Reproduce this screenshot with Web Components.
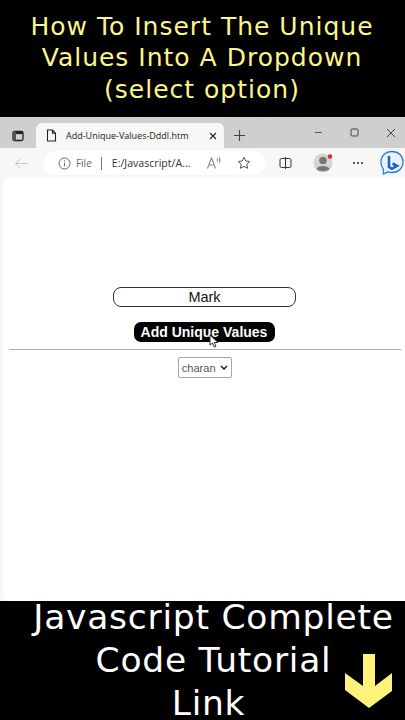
<!DOCTYPE html>
<html><head><meta charset="utf-8"><style>
html,body{margin:0;padding:0;background:#000;overflow:hidden}
body{width:405px;height:720px}
</style></head><body>
<video-short></video-short>
<template id="t-short"><style>
:host{display:flex;flex-direction:column;width:405px;height:720px;background:#000;overflow:hidden}
.top{height:117px;flex:none}
.main{height:484px;flex:none;display:flex;flex-direction:column}
.bot{height:119px;flex:none}
</style>
<title-band class="top">How To Insert The Unique<br>Values Into A Dropdown<br>(select option)</title-band>
<browser-window class="main"></browser-window>
<footer-band class="bot"></footer-band>
</template>
<template id="t-title"><style>
:host{display:block;color:#fdf68a;font:25px/31.5px "DejaVu Sans",sans-serif;letter-spacing:1px;text-align:center;padding:10.5px 1px 0 0;box-sizing:border-box}
</style><slot></slot></template>
<template id="t-browser"><style>
:host{display:flex;flex-direction:column;background:#f7f7f5;font-family:"Open Sans","Liberation Sans",sans-serif}
.tabs{height:31px;background:#cdd0cc;display:flex;align-items:flex-end;flex:none}
.ws{width:36px;height:25px;display:flex;align-items:center;justify-content:center}
.tab{width:188px;height:25px;background:#f7f7f5;border-radius:6px 6px 0 0;display:flex;align-items:center;box-sizing:border-box;padding:0 7px 0 10px;gap:9px;font-size:9px;color:#222}
.tab span{flex:1;white-space:nowrap}
.plus{width:30px;height:25px;display:flex;align-items:center;justify-content:center}
.win{margin-left:auto;display:flex;height:31px;align-items:center;gap:27px;padding:0 9px 0 0;box-sizing:border-box}
.nav{height:30px;flex:none;display:flex;align-items:center;padding:0 0 0 14px}
.back{width:16px;display:flex;margin-right:14px}
.omni{width:222px;height:24px;background:#fff;border-radius:12px;display:flex;align-items:center;box-sizing:border-box;padding:0 14px 0 14px;font-size:10px;color:#333;white-space:nowrap}
.file{color:#666;margin:0 9px 0 5px}
.sep{width:1px;height:13px;background:#777;margin-right:10px}
.url{flex:1;font-size:10.6px}
.aa{margin-right:16px;display:flex}
.tools{display:flex;align-items:center;margin-left:14px}
.page{flex:1;background:#fff;margin-left:3px;border-radius:6px 0 0 6px;box-sizing:border-box;display:flex;flex-direction:column;align-items:center;padding-top:109px;font-family:"Liberation Sans",sans-serif;position:relative}
.input{width:183px;height:20px;margin-left:1px;box-sizing:border-box;border:1.5px solid #333;border-radius:8px;text-align:center;font-size:14.5px;line-height:18px;color:#111}
.btn{margin-top:15px;width:141px;height:20px;background:#000;color:#fff;border-radius:7px;font-weight:700;font-size:14px;line-height:20px;text-align:center;white-space:nowrap}
.hr{align-self:stretch;height:1px;background:#b0b0b0;margin:7px 4px 0 6px}
.sel{margin-top:7px;margin-left:1px;width:54px;height:21px;box-sizing:border-box;border:1px solid #a5a5a5;border-radius:2px;font-size:11px;color:#555;display:flex;align-items:center;justify-content:flex-end;gap:4px;padding-right:3px}
.cursor{position:absolute;left:206px;top:156px}
</style>
<div class="tabs">
<div class="ws"><svg width="12" height="12" viewBox="0 0 12 12"><rect x="1" y="1.5" width="10" height="9" rx="1.5" fill="none" stroke="#222" stroke-width="1.3"/><rect x="1" y="1.5" width="10" height="2.6" fill="#222"/><rect x="1" y="1.5" width="3" height="9" fill="#555"/></svg></div>
<div class="tab"><svg width="11" height="13" viewBox="0 0 11 13"><path d="M1.500 1h5l3 3.200V12h-8zM6.500 1v3.200h3" fill="none" stroke="#222" stroke-width="1.1"/></svg><span>Add-Unique-Values-Dddl.htm</span><svg width="8" height="8" viewBox="0 0 8 8"><path d="M1 1l6 6M7 1L1 7" stroke="#222" stroke-width="1.1"/></svg></div>
<div class="plus"><svg width="13" height="13" viewBox="0 0 13 13"><path d="M6.500 1v11M1 6.500h11" stroke="#444" stroke-width="1.1"/></svg></div>
<div class="win">
<svg width="9" height="9" viewBox="0 0 9 9"><path d="M1 4.500h7" stroke="#555" stroke-width="1"/></svg>
<svg width="9" height="9" viewBox="0 0 9 9"><rect x="1" y="1" width="7" height="7" rx="1" fill="none" stroke="#444" stroke-width="1"/></svg>
<svg width="10" height="10" viewBox="0 0 10 10"><path d="M1 1l8 8M9 1L1 9" stroke="#444" stroke-width="1"/></svg>
</div></div>
<div class="nav">
<div class="back"><svg width="15" height="11" viewBox="0 0 15 11"><path d="M14 5.500H1.500M6 1L1.500 5.500 6 10" fill="none" stroke="#c4c8c8" stroke-width="1"/></svg></div>
<div class="omni">
<svg width="13" height="13" viewBox="0 0 13 13"><circle cx="6.500" cy="6.500" r="5.500" fill="none" stroke="#666"/><path d="M6.500 5.800v3.500M6.500 3.500v1.200" stroke="#666"/></svg>
<span class="file">File</span><span class="sep"></span><span class="url">E:/Javascript/A...</span>
<span class="aa"><svg width="14" height="12" viewBox="0 0 14 12"><path d="M.5 11.500L4.500 1l4 10.500M2 8h5M10 1.500c.8.7.8 2 0 3M12 .5c1.400 1.300 1.400 3.500 0 5" fill="none" stroke="#888" stroke-width="1.100"/></svg></span>
<svg width="14" height="14" viewBox="0 0 14 14"><path d="M7 1.300l1.800 3.700 4 .5-3 2.800.8 4L7 10.400l-3.600 1.900.8-4-3-2.800 4-.5z" fill="none" stroke="#555"/></svg>
</div>
<div class="tools">
<svg width="13" height="12" viewBox="0 0 13 12" style="margin-right:21px"><rect x="1" y="1.500" width="11" height="9" rx="1.500" fill="none" stroke="#333"/><path d="M6.500 0v12" stroke="#333"/></svg>
<svg width="22" height="22" viewBox="0 0 22 22" style="margin-right:17px"><circle cx="10" cy="11" r="9.500" fill="#d5d5d3"/><circle cx="10" cy="8.500" r="3.800" fill="#777"/><path d="M3.500 17c1-4 12-4 13 0-3 3-10 3-13 0z" fill="#777"/><circle cx="17" cy="4.500" r="2.300" fill="#e0282e"/></svg>
<svg width="12" height="4" viewBox="0 0 12 4" style="margin-right:15px"><circle cx="2" cy="2" r="1" fill="#222"/><circle cx="6" cy="2" r="1" fill="#222"/><circle cx="10" cy="2" r="1" fill="#222"/></svg>
<svg width="26" height="26" viewBox="0 0 26 26"><path d="M13 1.500C6.500 1.500 2 6 2 12.500c0 3 1 5 2.300 6.500L4.500 24l4.500-2.200c1.300.5 2.600.7 4 .7 6.500 0 11-4.500 11-10.500S19.500 1.500 13 1.500z" fill="#e8f2fb" stroke="#2f7fd0" stroke-width="1.300"/><path d="M10 6v11l3 1.800 5-3-4.500-2.300" fill="none" stroke="#1867c0" stroke-width="2.600"/></svg>
</div>
</div>
<div class="page">
<div class="input">Mark</div>
<div class="btn">Add Unique Values</div>
<div class="hr"></div>
<div class="sel"><span>charan</span><svg width="8" height="5" viewBox="0 0 8 5"><path d="M1 1l3 3 3-3" fill="none" stroke="#222" stroke-width="1.500"/></svg></div>
<svg class="cursor" width="10" height="14" viewBox="0 0 10 14"><path d="M1 1v10l2.500-2 1.700 4 1.800-.8-1.700-3.700H9z" fill="#fff" stroke="#222" stroke-width=".9"/></svg>
</div>
</template>
<template id="t-footer"><style>
:host{display:block;position:relative;color:#fff;font:34.500px/43px "DejaVu Sans",sans-serif;text-align:center;white-space:nowrap;box-sizing:border-box;letter-spacing:.75px}
.t{padding-left:22px;margin-top:-5px}
.l3{padding-right:10px}
svg{position:absolute;left:345px;top:53px}
</style><div class="t"><div>Javascript Complete</div><div>Code Tutorial</div><div class="l3">Link</div></div>
<svg width="47" height="54" viewBox="0 0 47 54"><path d="M18 0h12v32L47 19v18L24 54 0 36V19l18 13z" fill="#fdf27a"/></svg></template>
<script>
function def(name,id){customElements.define(name,class extends HTMLElement{constructor(){super();this.attachShadow({mode:'open'}).appendChild(document.getElementById(id).content.cloneNode(true));}});}
def('title-band','t-title');def('browser-window','t-browser');def('footer-band','t-footer');def('video-short','t-short');
</script>
</body></html>
